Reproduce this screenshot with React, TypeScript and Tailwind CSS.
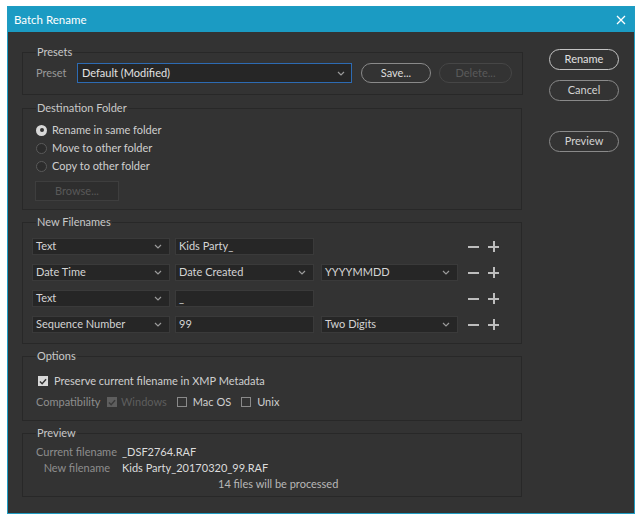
import React from 'react';

const font = { fontFamily: 'Lato, "Open Sans", sans-serif' };

const Chevron = () => (
    <svg width="8" height="5" viewBox="0 0 8 5" className="shrink-0">
        <path d="M1 1 L4 4 L7 1" fill="none" stroke="#9a9a9a" strokeWidth="1.2" />
    </svg>
);

const Select = ({ value, className = '' }: { value: string; className?: string }) => (
    <div className={`h-[17px] flex items-center justify-between pl-[3px] pr-[7px] bg-[#262626] border border-[#3a3a3a] text-[#d4d4d4] ${className}`}>
        <span>{value}</span>
        <Chevron />
    </div>
);

const Field = ({ value, className = '' }: { value: string; className?: string }) => (
    <div className={`h-[17px] flex items-center pl-[3px] bg-[#262626] border border-[#3a3a3a] text-[#d4d4d4] ${className}`}>
        {value}
    </div>
);

const Radio = ({ checked, label }: { checked?: boolean; label: string }) => (
    <div className="h-[18px] flex items-center gap-[5px] text-[#cfcfcf]">
        {checked ? (
            <span className="w-[11px] h-[11px] rounded-full bg-[#d8d8d8] flex items-center justify-center">
                <span className="w-[4px] h-[4px] rounded-full bg-[#333]" />
            </span>
        ) : (
            <span className="w-[11px] h-[11px] rounded-full border border-[#5a5a5a] bg-[#2c2c2c]" />
        )}
        {label}
    </div>
);

const Check = ({ checked, disabled, className = '' }: { checked?: boolean; disabled?: boolean; className?: string }) => {
    if (!checked) return <span className={`block shrink-0 w-[10px] h-[10px] border border-[#8a8a8a] ${className}`} />;
    return (
        <span className={`shrink-0 w-[10px] h-[10px] flex items-center justify-center ${disabled ? 'bg-[#5e5e5e]' : 'bg-[#d8d8d8]'} ${className}`}>
            <svg width="8" height="7" viewBox="0 0 9 8">
                <path d="M1 4 L3.5 6.5 L8 1.5" fill="none" stroke={disabled ? '#3a3a3a' : '#333'} strokeWidth="1.7" />
            </svg>
        </span>
    );
};

const PlusMinus = () => (
    <div className="flex items-center gap-[9px] ml-[10px]">
        <span className="w-[11px] h-[2px] bg-[#bdbdbd]" />
        <span className="relative w-[11px] h-[11px] flex items-center justify-center">
            <span className="w-[11px] h-[2px] bg-[#bdbdbd]" />
            <span className="absolute w-[2px] h-[11px] bg-[#bdbdbd]" />
        </span>
    </div>
);

const Group = ({ title, className = '', children }: { title: string; className?: string; children: React.ReactNode }) => (
    <fieldset className={`border border-[#282828] pl-[9px] pr-[10px] ${className}`}>
        <legend className="ml-[4px] px-[1px] leading-[14px] text-[#c8c8c8]">{title}</legend>
        {children}
    </fieldset>
);

const PillButton = ({ label, className = '' }: { label: string; className?: string }) => (
    <div className={`w-[70px] h-[21px] rounded-full border flex items-center justify-center ${className}`}>
        {label}
    </div>
);

export default function App() {
    const rows = [
        { a: 'Text', b: 'Kids Party_', bSel: false, c: '' },
        { a: 'Date Time', b: 'Date Created', bSel: true, c: 'YYYYMMDD' },
        { a: 'Text', b: '_', bSel: false, c: '' },
        { a: 'Sequence Number', b: '99', bSel: false, c: 'Two Digits' },
    ];

    return (
        <div className="w-[642px] h-[520px] bg-white pt-[6px] pl-[7px] text-[11px] whitespace-nowrap" style={font}>
            <div className="w-[628px] h-[508px] border border-[#1f9cc2] bg-[#333333] flex flex-col">
                {/* Title bar */}
                <div className="h-[25px] bg-[#1b9bc3] flex items-center justify-between pl-[6px] pr-[8px] text-white text-[11.5px]">
                    <span>Batch Rename</span>
                    <svg width="10" height="10" viewBox="0 0 10 10">
                        <path d="M1 1 L9 9 M9 1 L1 9" stroke="#fff" strokeWidth="1.3" />
                    </svg>
                </div>

                <div className="flex pt-[13px] pl-[14px]">
                    {/* Left column */}
                    <div className="w-[500px] flex flex-col gap-[5px]">
                        <Group title="Presets" className="h-[50px]">
                            <div className="flex items-center pt-[4px]">
                                <span className="w-[45px] pl-[4px] text-[#9a9a9a]">Preset</span>
                                <div className="w-[275px] h-[20px] flex items-center justify-between pl-[4px] pr-[6px] bg-[#262626] border border-[#2d6bb3] text-[#e2e2e2]">
                                    <span>Default (Modified)</span>
                                    <Chevron />
                                </div>
                                <div className="ml-[9px] w-[70px] h-[20px] rounded-full border border-[#8a8a8a] text-[#dedede] flex items-center justify-center">Save...</div>
                                <div className="ml-[8px] w-[73px] h-[20px] rounded-full border border-[#464646] text-[#5a5a5a] flex items-center justify-center">Delete...</div>
                            </div>
                        </Group>

                        <Group title="Destination Folder" className="h-[109px] mt-[1px]">
                            <div className="flex flex-col pt-[6px] pl-[4px]">
                                <Radio checked label="Rename in same folder" />
                                <Radio label="Move to other folder" />
                                <Radio label="Copy to other folder" />
                                <div className="mt-[6px] w-[84px] h-[20px] bg-[#2e2e2e] border border-[#3e3e3e] text-[#595959] flex items-center justify-center -ml-[1px]">
                                    Browse...
                                </div>
                            </div>
                        </Group>

                        <Group title="New Filenames" className="h-[129px]">
                            <div className="flex flex-col gap-[9px] pt-[9px]">
                                {rows.map((r, i) => (
                                    <div key={i} className="flex items-center">
                                        <Select value={r.a} className="w-[138px]" />
                                        {r.bSel ? (
                                            <Select value={r.b} className="w-[139px] ml-[5px]" />
                                        ) : (
                                            <Field value={r.b} className="w-[139px] ml-[5px]" />
                                        )}
                                        {r.c ? (
                                            <Select value={r.c} className="w-[137px] ml-[7px]" />
                                        ) : (
                                            <div className="w-[137px] ml-[7px]" />
                                        )}
                                        <PlusMinus />
                                    </div>
                                ))}
                            </div>
                        </Group>

                        <Group title="Options" className="h-[72px]">
                            <div className="flex flex-col gap-[5px] pt-[10px] pl-[4px] text-[#cfcfcf]">
                                <div className="h-[16px] flex items-center gap-[6px] pl-[2px]">
                                    <Check checked />
                                    Preserve current filename in XMP Metadata
                                </div>
                                <div className="h-[16px] flex items-center">
                                    <span className="w-[71px] text-[#8e8e8e]">Compatibility</span>
                                    <Check checked disabled />
                                    <span className="ml-[4px] text-[#5e5e5e]">Windows</span>
                                    <Check className="ml-[10px]" />
                                    <span className="ml-[6px]">Mac OS</span>
                                    <Check className="ml-[10px]" />
                                    <span className="ml-[6px]">Unix</span>
                                </div>
                            </div>
                        </Group>

                        <Group title="Preview" className="h-[71px]">
                            <div className="flex flex-col pt-[4px] pl-[4px] leading-[16px]">
                                <div className="flex">
                                    <span className="w-[86px] text-[#8e8e8e]">Current filename</span>
                                    <span className="text-[#dcdcdc]">_DSF2764.RAF</span>
                                </div>
                                <div className="flex">
                                    <span className="w-[74px] text-right text-[#8e8e8e]">New filename</span>
                                    <span className="ml-[12px] text-[#dcdcdc]">Kids Party_20170320_99.RAF</span>
                                </div>
                                <div className="pl-[182px] text-[#b8b8b8]">14 files will be processed</div>
                            </div>
                        </Group>
                    </div>

                    {/* Right column */}
                    <div className="ml-[27px] pt-[4px] flex flex-col">
                        <PillButton label="Rename" className="border-[#c4c4c4] text-[#e0e0e0]" />
                        <PillButton label="Cancel" className="mt-[10px] border-[#8a8a8a] text-[#d4d4d4]" />
                        <PillButton label="Preview" className="mt-[30px] border-[#8a8a8a] text-[#d4d4d4]" />
                    </div>
                </div>
            </div>
        </div>
    );
}
